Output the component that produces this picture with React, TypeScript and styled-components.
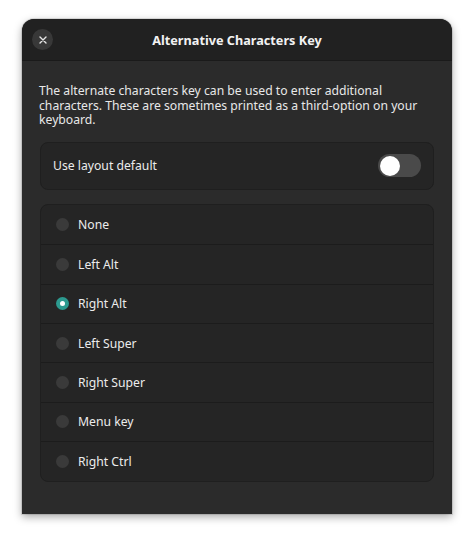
import styled, { createGlobalStyle } from 'styled-components';

const GlobalStyle = createGlobalStyle`
  html, body {
    margin: 0;
    padding: 0;
    background: #ffffff;
  }
  body {
    font-family: 'Noto Sans', 'Open Sans', sans-serif;
  }
`;

const Page = styled.div`
  display: flex;
  justify-content: center;
  padding-top: 19px;
  width: 474px;
  height: 539px;
  box-sizing: border-box;
`;

const Window = styled.div`
  width: 430px;
  height: 495px;
  background: #2b2b2b;
  border-radius: 12px 12px 0 0;
  box-shadow: 0 3px 9px rgba(0, 0, 0, 0.35), 0 0 0 1px rgba(0, 0, 0, 0.1);
  display: flex;
  flex-direction: column;
  overflow: hidden;
  color: #ffffff;
`;

const Header = styled.div`
  position: relative;
  height: 41px;
  flex-shrink: 0;
  background: #212121;
  border-bottom: 1px solid #1a1a1a;
  display: flex;
  align-items: center;
  justify-content: center;
`;

const CloseButton = styled.button`
  position: absolute;
  left: 10px;
  top: 10px;
  width: 21px;
  height: 21px;
  border-radius: 50%;
  border: none;
  background: #383838;
  padding: 0;
  display: flex;
  align-items: center;
  justify-content: center;
`;

const Title = styled.h1`
  margin: 0;
  font-size: 12.7px;
  font-weight: 700;
  color: #f2f2f2;
`;

const Body = styled.div`
  padding: 23px 18px 0 17px;
  display: flex;
  flex-direction: column;
`;

const Description = styled.p`
  margin: 0 0 14px 0;
  font-size: 12.2px;
  line-height: 14.6px;
  color: #e8e8e8;
`;

const Card = styled.div`
  background: #252525;
  border: 1px solid #1f1f1f;
  border-radius: 8px;
  margin-left: 1px;
  display: flex;
  flex-direction: column;
`;

const ToggleRow = styled.div`
  height: 46px;
  padding: 0 12px 0 12px;
  display: flex;
  align-items: center;
  justify-content: space-between;
`;

const Label = styled.span`
  font-size: 12.2px;
  color: #ececec;
`;

const Switch = styled.div<{ on?: boolean }>`
  width: 43px;
  height: 23px;
  border-radius: 12px;
  background: ${(p) => (p.on ? '#2a9d8f' : '#4a4a4a')};
  display: flex;
  align-items: center;
  padding: 0 2px;
  box-sizing: border-box;
  justify-content: ${(p) => (p.on ? 'flex-end' : 'flex-start')};
`;

const Knob = styled.div`
  width: 20px;
  height: 20px;
  border-radius: 50%;
  background: #ffffff;
`;

const Spacer = styled.div`
  height: 14px;
`;

const OptionRow = styled.div`
  height: 39.4px;
  box-sizing: border-box;
  display: flex;
  align-items: center;
  gap: 9px;
  padding-left: 15px;
  & + & {
    border-top: 1px solid #1c1c1c;
  }
`;

const Radio = styled.span<{ checked?: boolean }>`
  width: 13px;
  height: 13px;
  border-radius: 50%;
  box-sizing: border-box;
  background: ${(p) => (p.checked ? '#2c9a8f' : '#3a3a3a')};
  display: flex;
  align-items: center;
  justify-content: center;
  &::after {
    content: '';
    display: ${(p) => (p.checked ? 'block' : 'none')};
    width: 5px;
    height: 5px;
    border-radius: 50%;
    background: #ffffff;
  }
`;

const options = ['None', 'Left Alt', 'Right Alt', 'Left Super', 'Right Super', 'Menu key', 'Right Ctrl'];

const App = () => {
  const selected = 'Right Alt';
  return (
    <>
      <GlobalStyle />
      <Page>
        <Window>
          <Header>
            <CloseButton aria-label="Close">
              <svg width="8" height="8" viewBox="0 0 8 8">
                <path d="M1 1L7 7M7 1L1 7" stroke="#e6e6e6" strokeWidth="1.4" strokeLinecap="round" />
              </svg>
            </CloseButton>
            <Title>Alternative Characters Key</Title>
          </Header>
          <Body>
            <Description>
              The alternate characters key can be used to enter additional characters. These are sometimes
              printed as a third-option on your keyboard.
            </Description>
            <Card>
              <ToggleRow>
                <Label>Use layout default</Label>
                <Switch>
                  <Knob />
                </Switch>
              </ToggleRow>
            </Card>
            <Spacer />
            <Card>
              {options.map((o) => (
                <OptionRow key={o}>
                  <Radio checked={o === selected} />
                  <Label>{o}</Label>
                </OptionRow>
              ))}
            </Card>
          </Body>
        </Window>
      </Page>
    </>
  );
};

export default App;
